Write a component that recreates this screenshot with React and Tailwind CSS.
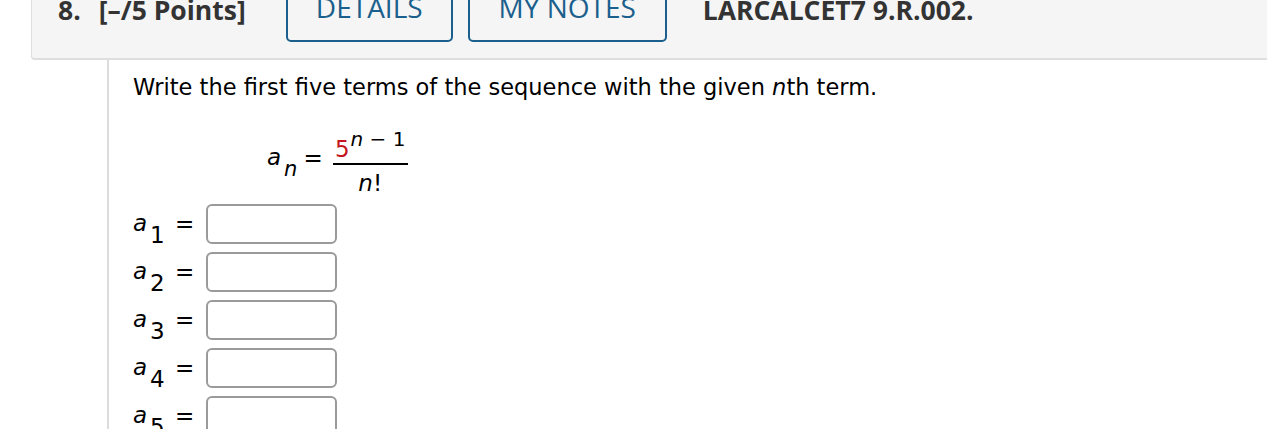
import React from "react";

const ROWS = [1, 2, 3, 4, 5];

const Header = () => (
  <div className="ml-[31px] h-[60px] bg-[#f5f5f5] border-l border-b-2 border-[#dedede] rounded-bl-[4px] overflow-hidden">
    <div className="flex items-start -mt-[9px] font-['Open_Sans',sans-serif]">
      <div className="ml-[26px] mt-[1px] text-[26.5px] font-bold text-[#333] leading-[36px] whitespace-nowrap">
        <span>8.</span>
        <span className="ml-[18px]">[–/5 Points]</span>
      </div>
      <div className="ml-[40px] w-[167px] h-[51px] border-2 border-[#1b5f8c] rounded-[5px] flex justify-center">
        <span className="text-[28px] text-[#1b5f8c] leading-[36px] -mt-[4px]">DETAILS</span>
      </div>
      <div className="ml-[15px] w-[199px] h-[51px] border-2 border-[#1b5f8c] rounded-[5px] flex justify-center">
        <span className="text-[28px] text-[#1b5f8c] leading-[36px] -mt-[4px]">MY NOTES</span>
      </div>
      <div className="ml-[36px] mt-[1px] text-[26.5px] font-bold text-[#333] leading-[36px] whitespace-nowrap">
        LARCALCET7 9.R.002.
      </div>
    </div>
  </div>
);

const Row = ({ n }) => (
  <div className="flex items-center h-[40px]">
    <div className="w-[42px] text-[23px] leading-none whitespace-nowrap -mt-[2px]">
      <span className="italic">a</span>
      <span className="relative top-[12px] ml-[3px]">{n}</span>
    </div>
    <div className="w-[31px] text-[23px] leading-none">=</div>
    <div className="w-[131px] h-[40px] border-2 border-[#9a9a9a] rounded-[6px] bg-white" />
  </div>
);

export default function App() {
  return (
    <div className="w-[1267px] h-[429px] bg-white overflow-hidden">
      <Header />
      <div className="ml-[107px] border-l-2 border-[#dcdcdc] h-[369px] pl-[24px] pt-[12px] font-['DejaVu_Sans',Verdana,sans-serif] text-black">
        <p className="text-[22.5px] leading-[30px]">
          Write the first five terms of the sequence with the given <span className="italic">n</span>th term.
        </p>
        <div className="flex items-center ml-[134px] mt-[28px] text-[23px]">
          <span className="italic -mt-[6px]">a</span>
          <span className="relative top-[9px] ml-[3px] italic text-[21px]">n</span>
          <span className="ml-[6px] -mt-[4px]">=</span>
          <div className="ml-[10px] flex flex-col items-center relative top-[6px]">
            <div className="px-[2px] leading-[26px] whitespace-nowrap">
              <span className="text-[#c4161c]">5</span>
              <span className="relative -top-[11px] text-[20px] ml-[1px]">
                <span className="italic">n</span> − 1
              </span>
            </div>
            <div className="w-[75px] border-t-2 border-black" />
            <div className="leading-[28px] mt-[4px]">
              <span className="italic">n</span>!
            </div>
          </div>
        </div>
        <div className="flex flex-col gap-[8px] mt-[13px]">
          {ROWS.map((n) => (
            <Row key={n} n={n} />
          ))}
        </div>
      </div>
    </div>
  );
}
